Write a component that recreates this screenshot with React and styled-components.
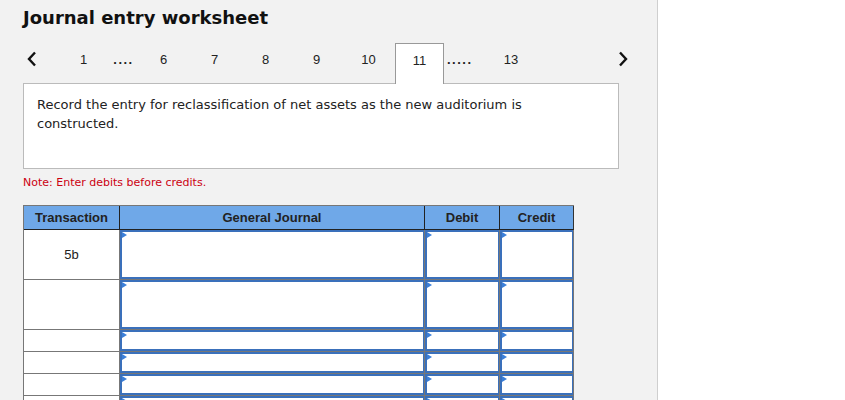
import React from 'react'
import styled, { createGlobalStyle } from 'styled-components'

const GlobalStyle = createGlobalStyle`
  html, body {
    margin: 0;
    padding: 0;
    background: #ffffff;
    overflow: hidden;
  }
  * { box-sizing: border-box; }
`

const pages = [
    { label: '1', w: 51 },
    { label: '....', w: 29, dots: true },
    { label: '6', w: 51 },
    { label: '7', w: 51 },
    { label: '8', w: 51 },
    { label: '9', w: 51 },
    { label: '10', w: 53 },
    { label: '11', w: 49, active: true },
    { label: '.....', w: 42, dots: true, left: true },
    { label: '13', w: 50 },
]

const rows = [
    { h: 50, tx: '5b' },
    { h: 50, tx: '' },
    { h: 22, tx: '' },
    { h: 22, tx: '' },
    { h: 22, tx: '' },
    { h: 22, tx: '' },
]

function Chevron({ dir }) {
    return (
        <svg width="12" height="16" viewBox="0 0 12 16">
            <path
                d={dir === 'left' ? 'M9 1.5 L3 8 L9 14.5' : 'M3 1.5 L9 8 L3 14.5'}
                fill="none"
                stroke="#111"
                strokeWidth="2.4"
            />
        </svg>
    )
}

function App() {
    return (
        <>
            <GlobalStyle />
            <Page>
                <Panel>
                    <Title>Journal entry worksheet</Title>
                    <Nav>
                        <Arrow><Chevron dir="left" /></Arrow>
                        {pages.map((p, i) => (
                            <Tab key={i} $w={p.w} $active={p.active} $dots={p.dots} $left={p.left}>
                                {p.label}
                            </Tab>
                        ))}
                        <Arrow $right><Chevron dir="right" /></Arrow>
                    </Nav>
                    <Prompt>
                        Record the entry for reclassification of net assets as the new auditorium is
                        constructed.
                    </Prompt>
                    <Note>Note: Enter debits before credits.</Note>
                    <Journal>
                        <Head>Transaction</Head>
                        <Head>General Journal</Head>
                        <Head>Debit</Head>
                        <Head $last>Credit</Head>
                        {rows.map((r, i) => (
                            <React.Fragment key={i}>
                                <TxCell $h={r.h}>{r.tx}</TxCell>
                                <EntryCell $h={r.h}><Field /></EntryCell>
                                <EntryCell $h={r.h}><Field /></EntryCell>
                                <EntryCell $h={r.h}><Field /></EntryCell>
                            </React.Fragment>
                        ))}
                    </Journal>
                </Panel>
            </Page>
        </>
    )
}

export default App

const Page = styled.div`
    display: flex;
    height: 400px;
    overflow: hidden;
    background: #ffffff;
`
const Panel = styled.div`
    width: 658px;
    height: 100%;
    overflow: hidden;
    background: #f2f2f2;
    border-right: 1px solid #cfcfcf;
    padding: 7px 0 0 23px;
    display: flex;
    flex-direction: column;
    & > * { flex-shrink: 0; }
`
const Title = styled.h1`
    margin: 0;
    font-family: 'DejaVu Sans', Verdana, sans-serif;
    font-weight: 700;
    font-size: 18px;
    line-height: 22px;
    color: #111;
`
const Nav = styled.div`
    display: flex;
    align-items: stretch;
    height: 40px;
    width: 606px;
    margin-top: 14px;
    font-family: 'Liberation Sans', Arial, sans-serif;
    font-size: 13px;
    color: #222;
`
const Arrow = styled.div`
    width: 35px;
    display: flex;
    align-items: center;
    padding-bottom: 8px;
    justify-content: ${p => (p.$right ? 'flex-end' : 'flex-start')};
    padding-left: ${p => (p.$right ? '0' : '3px')};
    margin-left: ${p => (p.$right ? 'auto' : '0')};
`
const Tab = styled.div`
    width: ${p => p.$w}px;
    display: flex;
    align-items: center;
    justify-content: ${p => (p.$left ? 'flex-start' : 'center')};
    padding-left: ${p => (p.$left ? '3px' : '0')};
    padding-bottom: 8px;
    font-weight: ${p => (p.$dots ? 700 : 400)};
    letter-spacing: ${p => (p.$dots ? '1.5px' : '0')};
    background: ${p => (p.$active ? '#ffffff' : 'transparent')};
    border: ${p => (p.$active ? '1px solid #999' : 'none')};
    border-bottom: none;
    position: relative;
    z-index: 1;
    margin-bottom: ${p => (p.$active ? '-1px' : '0')};
`
const Prompt = styled.div`
    width: 596px;
    height: 86px;
    background: #fff;
    border: 1px solid #bbb;
    padding: 11px 13px;
    font-family: 'DejaVu Sans', Verdana, sans-serif;
    font-size: 13px;
    line-height: 19px;
    color: #222;
`
const Note = styled.div`
    margin-top: 7px;
    font-family: 'DejaVu Sans', Verdana, sans-serif;
    font-size: 11px;
    line-height: 14px;
    color: #cc0011;
`
const Journal = styled.div`
    margin-top: 15px;
    display: grid;
    grid-template-columns: 96px 305px 75px 74px;
    width: 551px;
    border-top: 1px solid #777;
    border-left: 1px solid #777;
`
const Head = styled.div`
    height: 24px;
    background: #6fa8e8;
    border-right: 1px solid ${p => (p.$last ? '#333' : '#222')};
    border-bottom: 1px solid #222;
    display: flex;
    align-items: center;
    justify-content: center;
    font-family: 'Liberation Sans', Arial, sans-serif;
    font-weight: 700;
    font-size: 13px;
    color: #222;
`
const TxCell = styled.div`
    height: ${p => p.$h}px;
    background: #fff;
    border-right: 1px solid #777;
    border-bottom: 1px solid #777;
    display: flex;
    align-items: center;
    justify-content: center;
    font-family: 'Liberation Sans', Arial, sans-serif;
    font-size: 13px;
    color: #222;
`
const EntryCell = styled.div`
    height: ${p => p.$h}px;
    border-right: 1px solid #777;
    border-bottom: 1px solid #777;
    background: #fff;
`
const Field = styled.div`
    position: relative;
    height: 100%;
    border: 2px solid #3a70bb;
    border-right-width: 1px;
    background: #fff;
    &::before {
        content: '';
        position: absolute;
        top: 0;
        left: 0;
        border-top: 3px solid transparent;
        border-bottom: 3px solid transparent;
        border-left: 5px solid #3b7fd8;
    }
`
